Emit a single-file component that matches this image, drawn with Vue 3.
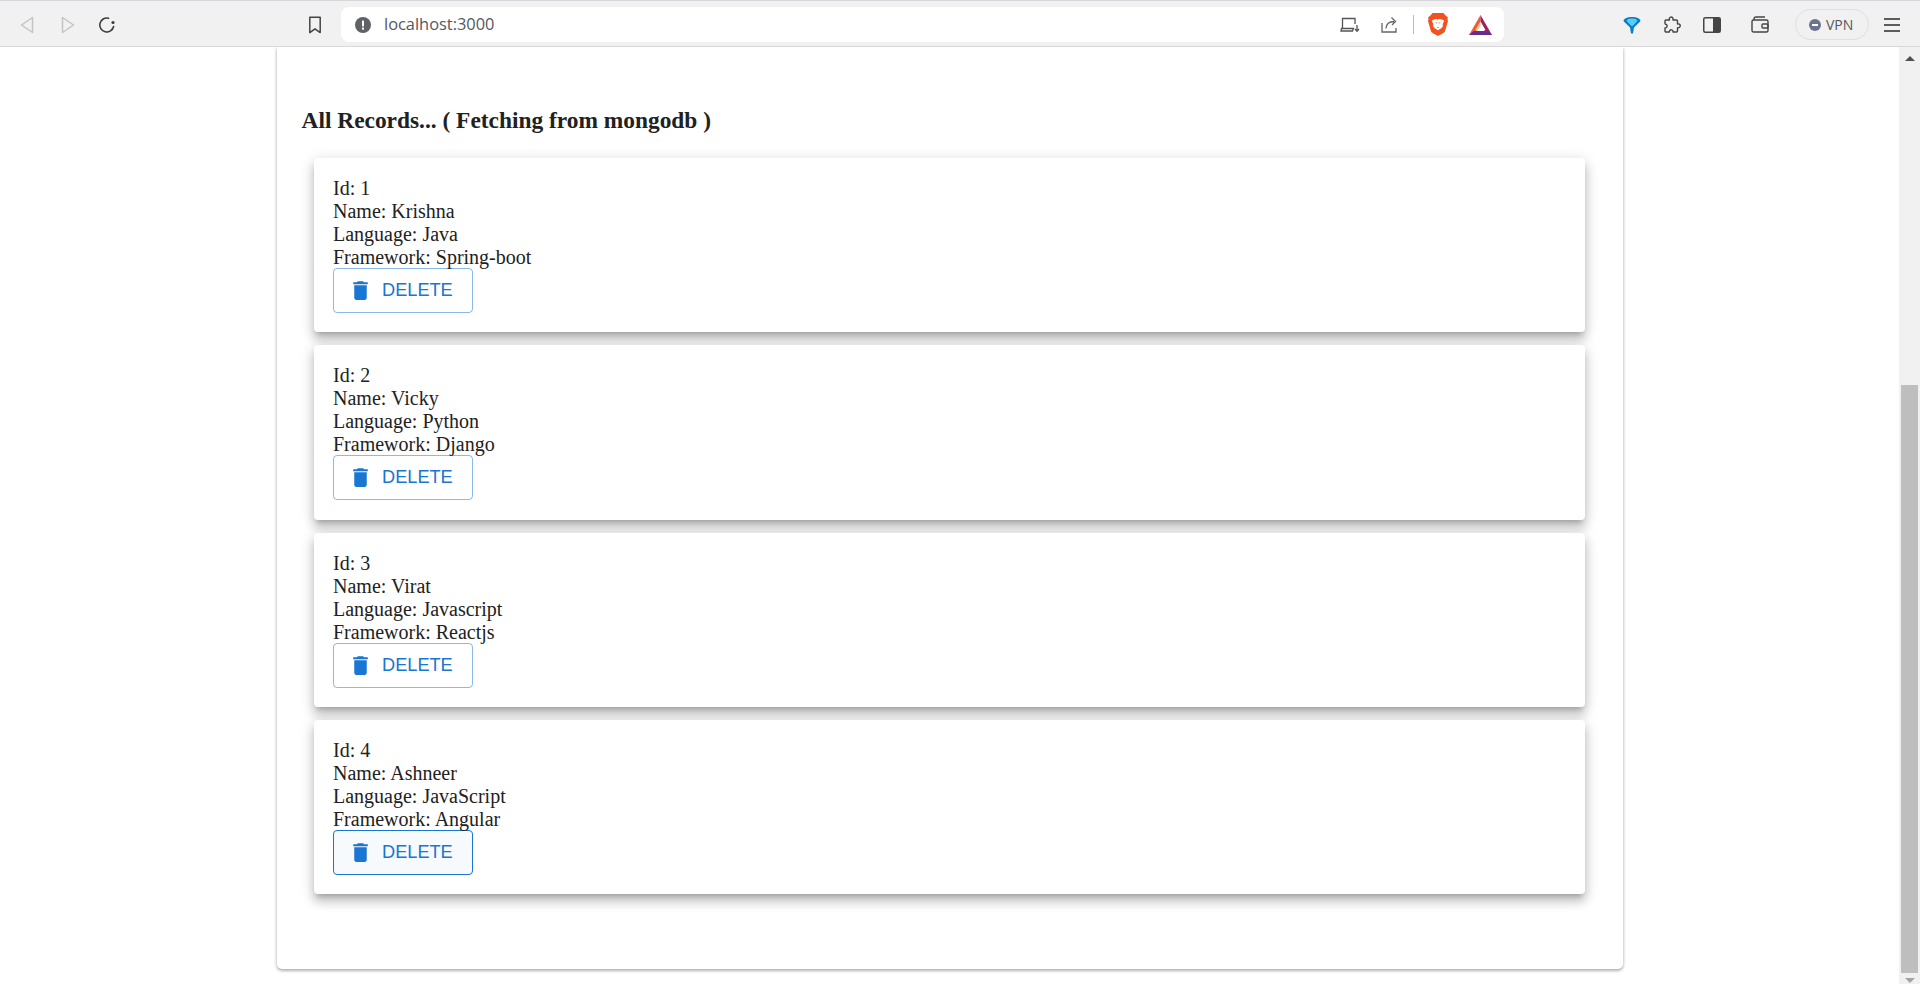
<script setup>
const records = [
  { id: 1, name: 'Krishna', language: 'Java', framework: 'Spring-boot' },
  { id: 2, name: 'Vicky', language: 'Python', framework: 'Django' },
  { id: 3, name: 'Virat', language: 'Javascript', framework: 'Reactjs' },
  { id: 4, name: 'Ashneer', language: 'JavaScript', framework: 'Angular' },
]
</script>

<template>
  <div class="window">
    <!-- browser chrome -->
    <header class="toolbar">
      <div class="nav">
        <svg width="14" height="18" viewBox="0 0 14 18" fill="none" stroke="#c4c4c4" stroke-width="1.5" stroke-linejoin="round"><path d="M12.5 1.5v15L1.5 9z" /></svg>
        <svg class="ic-forward" width="14" height="18" viewBox="0 0 14 18" fill="none" stroke="#c4c4c4" stroke-width="1.5" stroke-linejoin="round"><path d="M1.5 1.5v15L12.5 9z" /></svg>
        <svg class="ic-reload" width="18" height="18" viewBox="0 0 18 18" fill="none" stroke="#3c3c3c" stroke-width="1.6" stroke-linecap="round"><path d="M15.6 10.5A7 7 0 1 1 10.5 2.2" /><circle cx="15" cy="6.5" r="1.6" fill="#3c3c3c" stroke="none" /></svg>
      </div>
      <svg width="14" height="18" viewBox="0 0 14 18" fill="none" stroke="#444" stroke-width="1.5" stroke-linejoin="round"><path d="M1.8 1.2h10.4v15.4L7 12.8l-5.2 3.8z" /></svg>
      <div class="urlbar">
        <svg width="16" height="16" viewBox="0 0 16 16"><circle cx="8" cy="8" r="8" fill="#5f6368" /><rect x="7" y="3.6" width="2" height="5.8" fill="#fff" /><rect x="7" y="10.6" width="2" height="2" fill="#fff" /></svg>
        <span class="url">localhost:3000</span>
        <div class="url-actions">
          <svg width="20" height="16" viewBox="0 0 20 16" fill="none" stroke="#555" stroke-width="1.300"><path d="M2.500 11V1.500h12.500V7" /><path d="M1 14h11.500l1-2.500H1.500z" /><path d="M17 8v6M15 12l2 2.200 2-2.200" /></svg>
          <svg class="ic-share" width="17" height="17" viewBox="0 0 17 17" fill="none" stroke="#666" stroke-width="1.300"><path d="M1 7v9h14v-4" /><path d="M5 12.500c.3-4.500 3.400-7 8-7M10.500 1.500L14.500 5.500l-3.500 3.500" /></svg>
          <span class="divider"></span>
          <svg class="ic-brave" width="20" height="23" viewBox="0 0 20 23"><path d="M4.500 0h11l1.800 2.200L20 4.500l-.6 1.600.6 2-2.800 9.600c-.5 1.400-1.400 2-2.600 2.800L10 23l-4.600-2.500c-1.200-.8-2.100-1.400-2.600-2.800L0 8.100l.6-2L0 4.500l2.700-2.300z" fill="#f1531f" /><path d="M6 6.500l2.200-.6L10 6.600l1.800-.7 2.200.6 2.200 1.300-1.600 3.400.6 1.800-2.200 2.400-2 1.200L10 17.400l-1-.8-2-1.200-2.200-2.400.6-1.800-1.600-3.400z" fill="#fff" /><path d="M8.600 10.600L7 9.800l2.600-.2zM11.400 10.600l1.600-.8-2.600-.2zM9 14h2l-1 1.300z" fill="#f1531f" /></svg>
          <svg class="ic-bat" width="23" height="20" viewBox="0 0 23 20"><path d="M11.500 0L0 20h5l6.500-11.500z" fill="#f15a31" /><path d="M11.500 0v8.500L18 20h5z" fill="#9e1f63" /><path d="M0 20l4.800-4h13.400l4.800 4z" fill="#662d91" /><path d="M6.500 15l5-8.500 5 8.500z" fill="#fff" /><path d="M11.500 6.500L6.500 15H9l2.500-4.300z" fill="#f1a02d" opacity=".55" /></svg>
        </div>
      </div>
      <div class="extensions">
        <svg width="18" height="18" viewBox="0 0 18 18"><path d="M1 3.500C3 1.500 6 1 9 1s6 .5 8 2.500c.6.700.5 1.600-.1 2.300L11 11.500 10 17.500H8L7 11.500 1.100 5.800C.5 5.100.4 4.200 1 3.500z" fill="#0a7fc9" /><path d="M4 4c1.300-1 3-1.400 5-1.400S12.700 3 14 4c.4.500.3 1-.2 1.500L9.700 10h-1.400L4.200 5.500C3.700 5 3.600 4.500 4 4z" fill="#5ccbf5" /></svg>
        <svg width="18" height="18" viewBox="0 0 18 18" fill="none" stroke="#454545" stroke-width="1.400" stroke-linejoin="round"><path d="M7 1.500c1.500-1 3.500 0 3 2.500h3.500a1 1 0 0 1 1 1v3c2.400-.5 3.400 1.500 2.200 3-1 1.100-2.200.8-2.200.8v3.200a1 1 0 0 1-1 1H10c.4-2.500-3-3-3.500-.8l-.1.8H3a1 1 0 0 1-1-1v-3c2.500.2 3-3.500.4-3.800L2 7.500V5a1 1 0 0 1 1-1h3.500C6.200 3 6.300 2 7 1.500z" /></svg>
        <svg width="18" height="16" viewBox="0 0 18 16"><rect x=".75" y=".75" width="16.500" height="14.500" rx="1.500" fill="none" stroke="#454545" stroke-width="1.500" /><rect x="10" y="1" width="7" height="14" fill="#454545" /></svg>
        <svg class="ic-wallet" width="18" height="17" viewBox="0 0 18 17" fill="none" stroke="#454545" stroke-width="1.400"><path d="M3 4V3a2 2 0 0 1 2-2h9" /><rect x="1" y="4" width="16" height="12" rx="1.500" /><rect x="11" y="8" width="6" height="4" rx="1" /></svg>
      </div>
      <div class="vpn">
        <span class="vpn-dot"></span>
        <span>VPN</span>
      </div>
      <div class="hamburger"><i></i><i></i><i></i></div>
    </header>

    <div class="viewport">
      <div class="page">
        <main class="paper">
          <h3 class="title">All Records... ( Fetching from mongodb )</h3>
          <div class="list">
            <article v-for="r in records" :key="r.id" class="record">
              <div>Id: {{ r.id }}</div>
              <div>Name: {{ r.name }}</div>
              <div>Language: {{ r.language }}</div>
              <div>Framework: {{ r.framework }}</div>
              <button class="del" :class="{ hovered: r.id === 4 }" type="button">
                <svg width="25" height="25" viewBox="0 0 24 24" fill="#1976d2"><path d="M6 19c0 1.100.9 2 2 2h8c1.100 0 2-.9 2-2V7H6v12zM19 4h-3.500l-1-1h-5l-1 1H5v2h14V4z" /></svg>
                <span>DELETE</span>
              </button>
            </article>
          </div>
        </main>
      </div>
      <aside class="scrollbar">
        <span class="arrow up"></span>
        <div class="track"><div class="thumb"></div></div>
        <span class="arrow down"></span>
      </aside>
    </div>
  </div>
</template>

<style>
html,
body {
  margin: 0;
  overflow: hidden;
  background: #fff;
}
</style>

<style scoped>
.window {
  display: flex;
  flex-direction: column;
  width: 1920px;
  height: 984px;
  overflow: hidden;
  font-family: "Liberation Serif", serif;
  color: #212121;
}

/* toolbar */
.toolbar {
  display: flex;
  align-items: center;
  flex: none;
  height: 47px;
  box-sizing: border-box;
  padding-top: 2px;
  background: #f1f1f1;
  border-top: 1px solid #d4d6d9;
  border-bottom: 1px solid #d8d8d8;
  position: relative;
  z-index: 2;
}

.nav {
  display: flex;
  align-items: center;
  width: 300px;
  padding-left: 20px;
  box-sizing: border-box;
  margin-right: 8px;
}

.ic-forward {
  margin-left: 27px;
}

.ic-reload {
  margin-left: 23px;
}

.urlbar {
  display: flex;
  align-items: center;
  width: 1163px;
  height: 35px;
  margin-left: 19px;
  padding: 0 12px 0 14px;
  box-sizing: border-box;
  background: #fff;
  border-radius: 8px;
}

.url {
  margin: 0 0 2px 13px;
  font: 16.400px "Open Sans", sans-serif;
  color: #55585c;
}

.url-actions {
  display: flex;
  align-items: center;
  margin-left: auto;
}

.ic-share {
  margin-left: 21px;
}

.divider {
  width: 1px;
  height: 19px;
  margin: 0 14px 0 15px;
  background: #bdbdbd;
}

.ic-bat {
  margin-left: 21px;
}

.extensions {
  display: flex;
  align-items: center;
  gap: 22px;
  margin-left: 119px;
}

.ic-wallet {
  margin-left: 8px;
}

.vpn {
  display: flex;
  align-items: center;
  gap: 5px;
  width: 74px;
  height: 31px;
  margin-left: 26px;
  padding-left: 13px;
  box-sizing: border-box;
  border: 1px solid #dfdfdf;
  border-radius: 16px;
  font: 14px "Open Sans", sans-serif;
  color: #55585c;
}

.vpn-dot {
  position: relative;
  width: 12px;
  height: 12px;
  border-radius: 50%;
  background: #6b7390;
}

.vpn-dot::after {
  content: "";
  position: absolute;
  left: 3px;
  top: 5px;
  width: 6px;
  height: 2px;
  background: #fff;
}

.hamburger {
  display: flex;
  flex-direction: column;
  gap: 4px;
  margin-left: 15px;
}

.hamburger i {
  display: block;
  width: 16px;
  height: 2px;
  background: #5c5c5c;
}

/* page */
.viewport {
  display: flex;
  flex: 1;
  min-height: 0;
}

.page {
  flex: 1;
  display: flex;
  justify-content: center;
  align-items: flex-start;
  overflow: hidden;
  padding-left: 1px;
}

.paper {
  width: 1346px;
  height: 922px;
  box-sizing: border-box;
  padding: 60px 25px 0 24.500px;
  background: #fff;
  border-radius: 0 0 5px 5px;
  box-shadow: 0 2px 3px 0 rgba(0, 0, 0, 0.26), 0 0 4px 0 rgba(0, 0, 0, 0.14);
}

.title {
  margin: 0;
  font-size: 23.400px;
  line-height: 27px;
  font-weight: 700;
}

.list {
  display: flex;
  flex-direction: column;
  gap: 13px;
  margin: 24px 13px 0 12.500px;
}

.record {
  height: 174.330px;
  box-sizing: border-box;
  padding: 19px 19px 0;
  background: #fff;
  border-radius: 4px;
  font-size: 20px;
  line-height: 23px;
  box-shadow: 0 5px 5px -3px rgba(0, 0, 0, 0.2), 0 8px 10px 1px rgba(0, 0, 0, 0.14), 0 3px 14px 2px rgba(0, 0, 0, 0.12);
}

.del {
  display: flex;
  align-items: center;
  gap: 9px;
  width: 140px;
  height: 45px;
  margin-top: -1px;
  padding: 0 0 0 14px;
  box-sizing: border-box;
  background: transparent;
  border: 1px solid rgba(25, 118, 210, 0.5);
  border-radius: 4px;
  color: #1976d2;
  font: 18.200px "Liberation Sans", sans-serif;
}

.del.hovered {
  background: rgba(25, 118, 210, 0.04);
  border-color: #1976d2;
}

/* scrollbar */
.scrollbar {
  display: flex;
  flex-direction: column;
  align-items: center;
  flex: none;
  width: 21px;
  background: #f1f1f1;
}

.track {
  flex: 1;
  width: 100%;
  padding-top: 319px;
  box-sizing: border-box;
  display: flex;
  justify-content: center;
}

.thumb {
  width: 17px;
  height: 588px;
  background: #bebebe;
}

.arrow {
  flex: none;
  width: 0;
  height: 0;
  margin: 9px 0 5px;
  border-left: 5px solid transparent;
  border-right: 5px solid transparent;
}

.arrow.up {
  border-bottom: 5px solid #505050;
}

.arrow.down {
  margin: 5px 0 6px;
  border-top: 5px solid #a3a3a3;
}
</style>
